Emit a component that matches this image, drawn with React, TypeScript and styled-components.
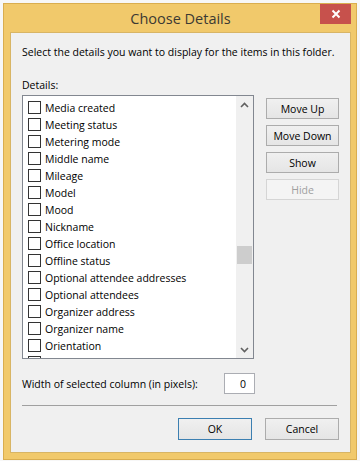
import styled, { createGlobalStyle } from "styled-components";

const GlobalStyle = createGlobalStyle`
  html, body {
    margin: 0;
    padding: 0;
    background: #f7f7f7;
  }
  body {
    font-family: "Open Sans", "Noto Sans", sans-serif;
    font-size: 10.5px;
    color: #000000;
  }
`;

const Page = styled.div`
  width: 360px;
  height: 461px;
  padding: 3px 0 0 3px;
  box-sizing: border-box;
`;

const Frame = styled.div`
  width: 354px;
  height: 457px;
  box-sizing: border-box;
  border: 1px solid #d9ad4f;
  background: #f1c96b;
  display: flex;
  flex-direction: column;
  padding: 0 5px 6px 6px;
`;

const TitleBar = styled.div`
  height: 28px;
  position: relative;
  display: flex;
  align-items: center;
  justify-content: center;
  flex-shrink: 0;
`;

const Title = styled.div`
  font-size: 14.5px;
  color: #3c3a33;
  padding-top: 1px;
`;

const CloseButton = styled.div`
  position: absolute;
  top: 0;
  right: 0;
  width: 31px;
  height: 20px;
  background: #c7514c;
  display: flex;
  align-items: center;
  justify-content: center;
`;

const Client = styled.div`
  flex: 1;
  background: #f0f0f0;
  border: 1px solid #d8b565;
  display: flex;
  flex-direction: column;
  padding: 11px 11px 0 11px;
`;

const Intro = styled.div`
  line-height: 16px;
  white-space: nowrap;
`;

const Label = styled.div`
  line-height: 16px;
  margin-top: 17px;
`;

const MainRow = styled.div`
  display: flex;
  margin-top: 2px;
  gap: 12px;
`;

const ListBox = styled.div`
  width: 233px;
  height: 264px;
  box-sizing: border-box;
  border: 1px solid #828790;
  background: #ffffff;
  display: flex;
  overflow: hidden;
`;

const Items = styled.div`
  flex: 1;
  padding-top: 3px;
  overflow: hidden;
`;

const Item = styled.div`
  height: 17px;
  display: flex;
  align-items: center;
  padding-left: 5px;
  gap: 4px;
  white-space: nowrap;
`;

const Check = styled.span`
  width: 13px;
  height: 13px;
  box-sizing: border-box;
  border: 1px solid #333333;
  background: #ffffff;
  flex-shrink: 0;
`;

const ScrollBar = styled.div`
  width: 17px;
  background: #f0f0f0;
  display: flex;
  flex-direction: column;
  align-items: center;
`;

const Arrow = styled.div`
  height: 17px;
  width: 17px;
  display: flex;
  align-items: center;
  justify-content: center;
`;

const Track = styled.div`
  flex: 1;
  width: 100%;
  padding-top: 133px;
  box-sizing: border-box;
`;

const Thumb = styled.div`
  margin: 0 1px;
  height: 18px;
  background: #cdcdcd;
`;

const SideButtons = styled.div`
  display: flex;
  flex-direction: column;
  gap: 6px;
  padding-top: 3px;
`;

const Button = styled.div<{ $disabled?: boolean; $default?: boolean; $w?: number; $h?: number }>`
  width: ${(p) => p.$w ?? 73}px;
  height: ${(p) => p.$h ?? 21}px;
  box-sizing: border-box;
  border: 1px solid
    ${(p) => (p.$disabled ? "#d5d5d5" : p.$default ? "#3c7fb1" : "#acacac")};
  background: ${(p) =>
    p.$disabled ? "#f4f4f4" : "linear-gradient(#f0f0f0, #e5e5e5)"};
  color: ${(p) => (p.$disabled ? "#a0a0a0" : "#000000")};
  display: flex;
  align-items: center;
  justify-content: center;
`;

const WidthRow = styled.div`
  display: flex;
  align-items: center;
  margin-top: 14px;
`;

const WidthLabel = styled.span`
  width: 202px;
`;

const NumberBox = styled.div`
  width: 31px;
  height: 21px;
  box-sizing: border-box;
  border: 1px solid #abadb3;
  background: #ffffff;
  display: flex;
  align-items: center;
  justify-content: flex-end;
  padding-right: 8px;
`;

const Separator = styled.div`
  height: 1px;
  background: #a0a0a0;
  margin: 11px 2px 0 0;
`;

const Footer = styled.div`
  display: flex;
  justify-content: flex-end;
  gap: 13px;
  margin-top: 12px;
`;

const items = [
  "Media created",
  "Meeting status",
  "Metering mode",
  "Middle name",
  "Mileage",
  "Model",
  "Mood",
  "Nickname",
  "Office location",
  "Offline status",
  "Optional attendee addresses",
  "Optional attendees",
  "Organizer address",
  "Organizer name",
  "Orientation",
];

const Chevron = ({ up }: { up?: boolean }) => (
  <svg width="9" height="6" viewBox="0 0 9 6">
    <path
      d={up ? "M1 5 L4.5 1.5 L8 5" : "M1 1 L4.5 4.5 L8 1"}
      fill="none"
      stroke="#606060"
      strokeWidth="1.6"
    />
  </svg>
);

export default function App(): JSX.Element {
  return (
    <Page>
      <GlobalStyle />
      <Frame>
        <TitleBar>
          <Title>Choose Details</Title>
          <CloseButton>
            <svg width="10" height="10" viewBox="0 0 10 10">
              <path
                d="M1.5 1.5 L8.5 8.5 M8.5 1.5 L1.5 8.5"
                stroke="#ffffff"
                strokeWidth="2"
              />
            </svg>
          </CloseButton>
        </TitleBar>
        <Client>
          <Intro>Select the details you want to display for the items in this folder.</Intro>
          <Label>Details:</Label>
          <MainRow>
            <ListBox>
              <Items>
                {items.map((name) => (
                  <Item key={name}>
                    <Check />
                    {name}
                  </Item>
                ))}
                {/* next row, scrolled mostly out of view */}
                <Item>
                  <Check />
                </Item>
              </Items>
              <ScrollBar>
                <Arrow>
                  <Chevron up />
                </Arrow>
                <Track>
                  <Thumb />
                </Track>
                <Arrow>
                  <Chevron />
                </Arrow>
              </ScrollBar>
            </ListBox>
            <SideButtons>
              <Button>Move Up</Button>
              <Button>Move Down</Button>
              <Button>Show</Button>
              <Button $disabled>Hide</Button>
            </SideButtons>
          </MainRow>
          <WidthRow>
            <WidthLabel>Width of selected column (in pixels):</WidthLabel>
            <NumberBox>0</NumberBox>
          </WidthRow>
          <Separator />
          <Footer>
            <Button $default $w={74} $h={22}>
              OK
            </Button>
            <Button $w={74} $h={22}>
              Cancel
            </Button>
          </Footer>
        </Client>
      </Frame>
    </Page>
  );
}
